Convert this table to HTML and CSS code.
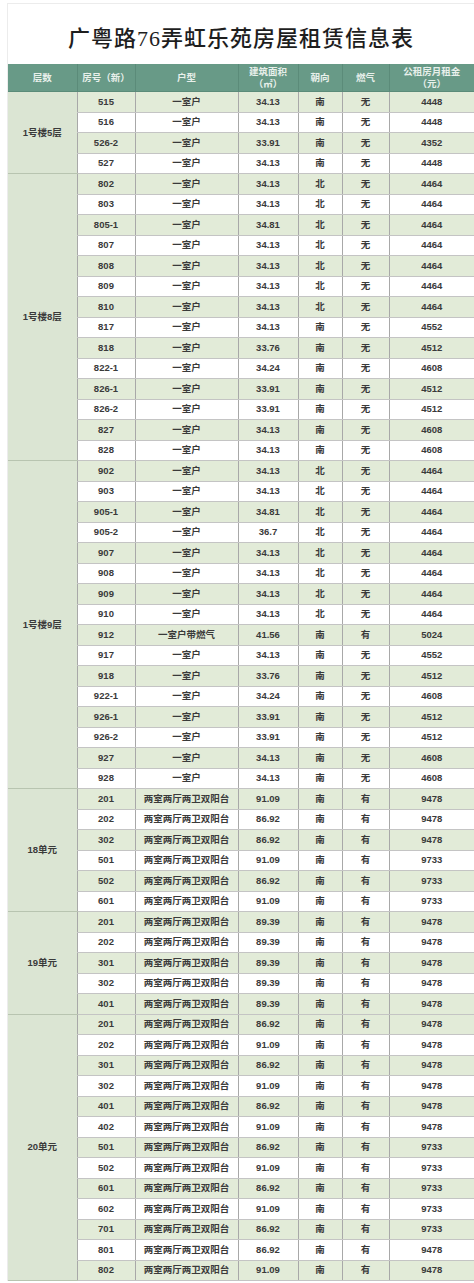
FILE: index.html
```
<!DOCTYPE html>
<html lang="zh-CN">
<head>
<meta charset="utf-8">
<title>广粤路76弄虹乐苑房屋租赁信息表</title>
<link rel="stylesheet" href="styles.css">
</head>
<body>
<div class="page">
  <h1 class="title">广粤路76弄虹乐苑房屋租赁信息表</h1>
  <table class="sheet">
    <colgroup>
      <col class="c-floor"><col class="c-room"><col class="c-type"><col class="c-area"><col class="c-dir"><col class="c-gas"><col class="c-rent">
    </colgroup>
    <thead>
      <tr><th>层数</th><th>房号（新）</th><th>户型</th><th>建筑面积<br>（㎡）</th><th>朝向</th><th>燃气</th><th>公租房月租金<br>（元）</th></tr>
    </thead>
    <tbody class="grp">
      <tr class="g"><td class="lbl" rowspan="4">1号楼5层</td><td>515</td><td>一室户</td><td>34.13</td><td>南</td><td>无</td><td>4448</td></tr>
      <tr><td>516</td><td>一室户</td><td>34.13</td><td>南</td><td>无</td><td>4448</td></tr>
      <tr class="g"><td>526-2</td><td>一室户</td><td>33.91</td><td>南</td><td>无</td><td>4352</td></tr>
      <tr><td>527</td><td>一室户</td><td>34.13</td><td>南</td><td>无</td><td>4448</td></tr>
    </tbody>
    <tbody class="grp">
      <tr class="g"><td class="lbl" rowspan="14">1号楼8层</td><td>802</td><td>一室户</td><td>34.13</td><td>北</td><td>无</td><td>4464</td></tr>
      <tr><td>803</td><td>一室户</td><td>34.13</td><td>北</td><td>无</td><td>4464</td></tr>
      <tr class="g"><td>805-1</td><td>一室户</td><td>34.81</td><td>北</td><td>无</td><td>4464</td></tr>
      <tr><td>807</td><td>一室户</td><td>34.13</td><td>北</td><td>无</td><td>4464</td></tr>
      <tr class="g"><td>808</td><td>一室户</td><td>34.13</td><td>北</td><td>无</td><td>4464</td></tr>
      <tr><td>809</td><td>一室户</td><td>34.13</td><td>北</td><td>无</td><td>4464</td></tr>
      <tr class="g"><td>810</td><td>一室户</td><td>34.13</td><td>北</td><td>无</td><td>4464</td></tr>
      <tr><td>817</td><td>一室户</td><td>34.13</td><td>南</td><td>无</td><td>4552</td></tr>
      <tr class="g"><td>818</td><td>一室户</td><td>33.76</td><td>南</td><td>无</td><td>4512</td></tr>
      <tr><td>822-1</td><td>一室户</td><td>34.24</td><td>南</td><td>无</td><td>4608</td></tr>
      <tr class="g"><td>826-1</td><td>一室户</td><td>33.91</td><td>南</td><td>无</td><td>4512</td></tr>
      <tr><td>826-2</td><td>一室户</td><td>33.91</td><td>南</td><td>无</td><td>4512</td></tr>
      <tr class="g"><td>827</td><td>一室户</td><td>34.13</td><td>南</td><td>无</td><td>4608</td></tr>
      <tr><td>828</td><td>一室户</td><td>34.13</td><td>南</td><td>无</td><td>4608</td></tr>
    </tbody>
    <tbody class="grp">
      <tr class="g"><td class="lbl" rowspan="16">1号楼9层</td><td>902</td><td>一室户</td><td>34.13</td><td>北</td><td>无</td><td>4464</td></tr>
      <tr><td>903</td><td>一室户</td><td>34.13</td><td>北</td><td>无</td><td>4464</td></tr>
      <tr class="g"><td>905-1</td><td>一室户</td><td>34.81</td><td>北</td><td>无</td><td>4464</td></tr>
      <tr><td>905-2</td><td>一室户</td><td>36.7</td><td>北</td><td>无</td><td>4464</td></tr>
      <tr class="g"><td>907</td><td>一室户</td><td>34.13</td><td>北</td><td>无</td><td>4464</td></tr>
      <tr><td>908</td><td>一室户</td><td>34.13</td><td>北</td><td>无</td><td>4464</td></tr>
      <tr class="g"><td>909</td><td>一室户</td><td>34.13</td><td>北</td><td>无</td><td>4464</td></tr>
      <tr><td>910</td><td>一室户</td><td>34.13</td><td>北</td><td>无</td><td>4464</td></tr>
      <tr class="g"><td>912</td><td>一室户带燃气</td><td>41.56</td><td>南</td><td>有</td><td>5024</td></tr>
      <tr><td>917</td><td>一室户</td><td>34.13</td><td>南</td><td>无</td><td>4552</td></tr>
      <tr class="g"><td>918</td><td>一室户</td><td>33.76</td><td>南</td><td>无</td><td>4512</td></tr>
      <tr><td>922-1</td><td>一室户</td><td>34.24</td><td>南</td><td>无</td><td>4608</td></tr>
      <tr class="g"><td>926-1</td><td>一室户</td><td>33.91</td><td>南</td><td>无</td><td>4512</td></tr>
      <tr><td>926-2</td><td>一室户</td><td>33.91</td><td>南</td><td>无</td><td>4512</td></tr>
      <tr class="g"><td>927</td><td>一室户</td><td>34.13</td><td>南</td><td>无</td><td>4608</td></tr>
      <tr><td>928</td><td>一室户</td><td>34.13</td><td>南</td><td>无</td><td>4608</td></tr>
    </tbody>
    <tbody class="grp">
      <tr class="g"><td class="lbl" rowspan="6">18单元</td><td>201</td><td>两室两厅两卫双阳台</td><td>91.09</td><td>南</td><td>有</td><td>9478</td></tr>
      <tr><td>202</td><td>两室两厅两卫双阳台</td><td>86.92</td><td>南</td><td>有</td><td>9478</td></tr>
      <tr class="g"><td>302</td><td>两室两厅两卫双阳台</td><td>86.92</td><td>南</td><td>有</td><td>9478</td></tr>
      <tr><td>501</td><td>两室两厅两卫双阳台</td><td>91.09</td><td>南</td><td>有</td><td>9733</td></tr>
      <tr class="g"><td>502</td><td>两室两厅两卫双阳台</td><td>86.92</td><td>南</td><td>有</td><td>9733</td></tr>
      <tr><td>601</td><td>两室两厅两卫双阳台</td><td>91.09</td><td>南</td><td>有</td><td>9733</td></tr>
    </tbody>
    <tbody class="grp">
      <tr class="g"><td class="lbl" rowspan="5">19单元</td><td>201</td><td>两室两厅两卫双阳台</td><td>89.39</td><td>南</td><td>有</td><td>9478</td></tr>
      <tr><td>202</td><td>两室两厅两卫双阳台</td><td>89.39</td><td>南</td><td>有</td><td>9478</td></tr>
      <tr class="g"><td>301</td><td>两室两厅两卫双阳台</td><td>89.39</td><td>南</td><td>有</td><td>9478</td></tr>
      <tr><td>302</td><td>两室两厅两卫双阳台</td><td>89.39</td><td>南</td><td>有</td><td>9478</td></tr>
      <tr class="g"><td>401</td><td>两室两厅两卫双阳台</td><td>89.39</td><td>南</td><td>有</td><td>9478</td></tr>
    </tbody>
    <tbody class="grp">
      <tr class="g"><td class="lbl" rowspan="13">20单元</td><td>201</td><td>两室两厅两卫双阳台</td><td>86.92</td><td>南</td><td>有</td><td>9478</td></tr>
      <tr><td>202</td><td>两室两厅两卫双阳台</td><td>91.09</td><td>南</td><td>有</td><td>9478</td></tr>
      <tr class="g"><td>301</td><td>两室两厅两卫双阳台</td><td>86.92</td><td>南</td><td>有</td><td>9478</td></tr>
      <tr><td>302</td><td>两室两厅两卫双阳台</td><td>91.09</td><td>南</td><td>有</td><td>9478</td></tr>
      <tr class="g"><td>401</td><td>两室两厅两卫双阳台</td><td>86.92</td><td>南</td><td>有</td><td>9478</td></tr>
      <tr><td>402</td><td>两室两厅两卫双阳台</td><td>91.09</td><td>南</td><td>有</td><td>9478</td></tr>
      <tr class="g"><td>501</td><td>两室两厅两卫双阳台</td><td>86.92</td><td>南</td><td>有</td><td>9733</td></tr>
      <tr><td>502</td><td>两室两厅两卫双阳台</td><td>91.09</td><td>南</td><td>有</td><td>9733</td></tr>
      <tr class="g"><td>601</td><td>两室两厅两卫双阳台</td><td>86.92</td><td>南</td><td>有</td><td>9733</td></tr>
      <tr><td>602</td><td>两室两厅两卫双阳台</td><td>91.09</td><td>南</td><td>有</td><td>9733</td></tr>
      <tr class="g"><td>701</td><td>两室两厅两卫双阳台</td><td>86.92</td><td>南</td><td>有</td><td>9733</td></tr>
      <tr><td>801</td><td>两室两厅两卫双阳台</td><td>86.92</td><td>南</td><td>有</td><td>9478</td></tr>
      <tr class="g"><td>802</td><td>两室两厅两卫双阳台</td><td>91.09</td><td>南</td><td>有</td><td>9478</td></tr>
    </tbody>
  </table>
</div>
</body>
</html>
```
FILE: styles.css
```
html, body {
  margin: 0;
  padding: 0;
  background: #ffffff;
}
.page {
  margin: 3px 0 0 7px;
  border-top: 1px solid #ececec;
  border-left: 1px solid #ececec;
  width: 466px;
}
.title {
  margin: 0;
  height: 60px;
  display: flex;
  align-items: center;
  justify-content: center;
  font-family: "Liberation Serif", "Noto Sans CJK SC", serif;
  font-size: 22px;
  font-weight: 500;
  letter-spacing: 1px;
  color: #1e1e1e;
  padding-top: 4px;
  box-sizing: border-box;
}
.sheet {
  width: 466px;
  table-layout: fixed;
  border-collapse: collapse;
  font-family: "Liberation Sans", "Noto Sans CJK SC", sans-serif;
  font-size: 9.5px;
  font-weight: bold;
  color: #3a3a3a;
}
.c-floor { width: 69px; }
.c-room { width: 58px; }
.c-type { width: 103px; }
.c-area { width: 60px; }
.c-dir { width: 44px; }
.c-gas { width: 47px; }
.c-rent { width: 85px; }
.sheet th {
  background: #689a87;
  color: #e8f0eb;
  font-size: 9.5px;
  line-height: 12px;
  font-weight: bold;
  height: 27px;
  padding: 0;
  border-left: 1px solid #5b8b79;
  border-bottom: 1px solid #5b8b79;
  text-align: center;
  vertical-align: middle;
}
.sheet th:first-child { border-left: none; }
.sheet td {
  height: 19.5px;
  padding: 0;
  text-align: center;
  vertical-align: middle;
  line-height: 12px;
  border-left: 1px solid #a8a8a8;
  border-bottom: 1px solid #c4c4c4;
  background: #ffffff;
  white-space: nowrap;
}
.sheet tr.g td { background: #e2ebd8; }
.sheet td.lbl,
.sheet tr.g td.lbl {
  background: #dbe5d3;
  border-left: none;
  border-bottom: 1px solid #b8c4b0;
}
```
